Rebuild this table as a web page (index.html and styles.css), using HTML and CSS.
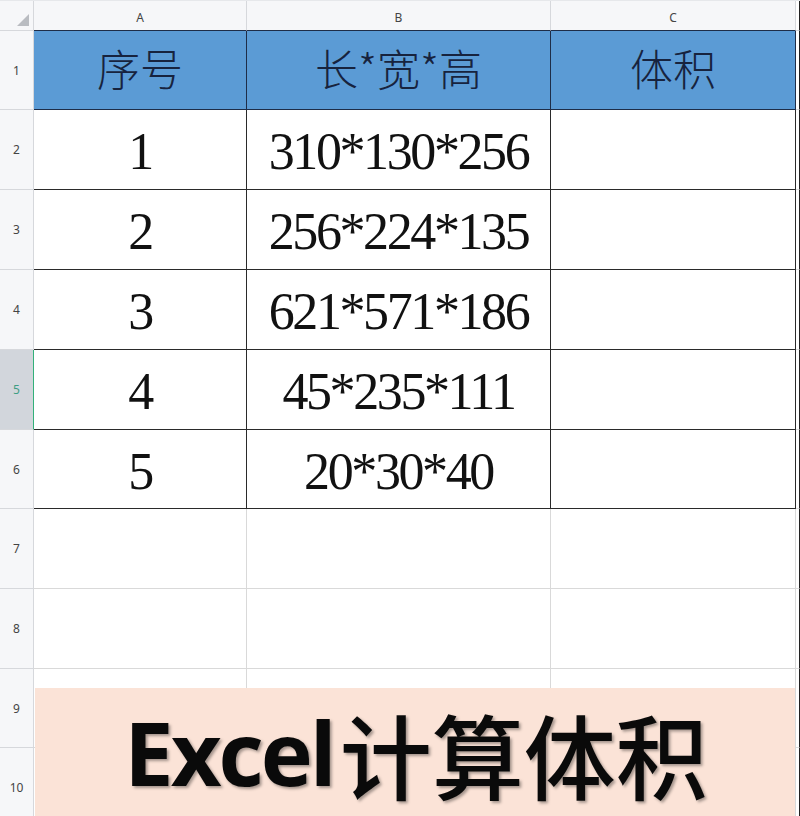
FILE: index.html
```html
<!DOCTYPE html>
<html>
<head>
<meta charset="utf-8">
<link rel="stylesheet" href="styles.css">
</head>
<body>
<div class="sheet">
  <div class="corner"><span class="tri"></span></div>
  <div class="colh">A</div>
  <div class="colh">B</div>
  <div class="colh">C</div>
  <div class="colh edge"></div>

  <div class="rowh">1</div>
  <div class="cell th">序号</div>
  <div class="cell th">长*宽*高</div>
  <div class="cell th last">体积</div>
  <div class="edge"></div>

  <div class="rowh">2</div>
  <div class="cell td">1</div>
  <div class="cell td">310*130*256</div>
  <div class="cell td last"></div>
  <div class="edge"></div>

  <div class="rowh">3</div>
  <div class="cell td">2</div>
  <div class="cell td">256*224*135</div>
  <div class="cell td last"></div>
  <div class="edge"></div>

  <div class="rowh">4</div>
  <div class="cell td">3</div>
  <div class="cell td">621*571*186</div>
  <div class="cell td last"></div>
  <div class="edge"></div>

  <div class="rowh sel">5</div>
  <div class="cell td">4</div>
  <div class="cell td">45*235*111</div>
  <div class="cell td last"></div>
  <div class="edge"></div>

  <div class="rowh">6</div>
  <div class="cell td">5</div>
  <div class="cell td">20*30*40</div>
  <div class="cell td last"></div>
  <div class="edge"></div>

  <div class="rowh">7</div>
  <div class="cell"></div>
  <div class="cell"></div>
  <div class="cell"></div>
  <div class="edge"></div>

  <div class="rowh">8</div>
  <div class="cell"></div>
  <div class="cell"></div>
  <div class="cell"></div>
  <div class="edge"></div>

  <div class="rowh">9</div>
  <div class="cell"></div>
  <div class="cell"></div>
  <div class="cell"></div>
  <div class="edge"></div>

  <div class="rowh r10">10</div>
  <div class="cell"></div>
  <div class="cell"></div>
  <div class="cell"></div>
  <div class="edge"></div>
</div>
<div class="banner"><span class="en">Excel</span><span class="zh">计算体积</span></div>
</body>
</html>
```
FILE: styles.css
```css
html, body {
  margin: 0;
  padding: 0;
  background: #ffffff;
}
body {
  width: 800px;
  height: 816px;
  position: relative;
  font-family: "Liberation Serif", "Noto Sans CJK SC", serif;
}
.sheet {
  display: grid;
  grid-template-columns: 34px 213px 304px 245px 4px;
  grid-template-rows: 30px 79px 80px 80px 80px 80px 79px 80px 80px 79px 69px;
  border-top: 1px solid #e6e8eb;
  box-sizing: border-box;
  height: 816px;
}
.corner {
  background: #f6f7f9;
  border-right: 1px solid #d6d8dc;
  border-bottom: 1px solid #d6d8dc;
  position: relative;
}
.tri {
  position: absolute;
  right: 4px;
  bottom: 4px;
  width: 0;
  height: 0;
  border-left: 12px solid transparent;
  border-bottom: 12px solid #b9bcc1;
}
.colh {
  background: #f6f7f9;
  border-right: 1px solid #d6d8dc;
  border-bottom: 1px solid #1e2d48;
  display: flex;
  align-items: center;
  justify-content: center;
  font-family: "Noto Sans", "Liberation Sans", sans-serif;
  font-size: 12px;
  color: #444;
  padding-top: 3px;
  box-sizing: border-box;
}
.colh.edge {
  border-right: 1px solid #222;
  border-bottom: 1px solid #d6d8dc;
}
.rowh {
  background: #f6f7f9;
  border-right: 1px solid #d6d8dc;
  border-bottom: 1px solid #d6d8dc;
  display: flex;
  align-items: center;
  justify-content: center;
  font-family: "Noto Sans", "Liberation Sans", sans-serif;
  font-size: 12px;
  color: #444;
}
.rowh.r10 {
  border-bottom: none;
  padding-top: 10px;
}
.rowh.sel {
  background: #d2d6dc;
  color: #3f9e84;
  border-right: 1px solid #33b07a;
}
.edge {
  border-right: 1px solid #222;
  border-bottom: 1px solid #dcdcdc;
  background: #fff;
}
.cell {
  border-right: 1px solid #d9d9d9;
  border-bottom: 1px solid #d9d9d9;
  display: flex;
  align-items: center;
  justify-content: center;
  box-sizing: border-box;
}
.th {
  background: #5b9bd5;
  border-right: 1px solid #1e2d48;
  border-bottom: 1px solid #1e2d48;
  font-family: "Noto Sans CJK SC", sans-serif;
  font-size: 43px;
  font-weight: 300;
  color: #17233e;
  padding-bottom: 6px;
}
.td {
  border-right: 1px solid #2a2a2a;
  border-bottom: 1px solid #2a2a2a;
  font-family: "Liberation Serif", serif;
  font-size: 52px;
  letter-spacing: -2.4px;
  color: #111;
  padding-top: 4px;
}
.banner {
  position: absolute;
  left: 35px;
  top: 688px;
  width: 760px;
  height: 128px;
  background: #fbe3d7;
  display: flex;
  align-items: center;
  justify-content: center;
  padding-left: 2px;
  box-sizing: border-box;
  color: #0a0a0a;
  text-shadow: 2px 2px 3px rgba(0,0,0,0.35);
  line-height: 1.25;
}
.en {
  font-family: "Open Sans", "Noto Sans", sans-serif;
  font-weight: 700;
  font-size: 88px;
  letter-spacing: -3px;
  margin-right: 6px;
}
.zh {
  font-family: "Noto Sans CJK SC", sans-serif;
  font-weight: 500;
  font-size: 92px;
}
```
